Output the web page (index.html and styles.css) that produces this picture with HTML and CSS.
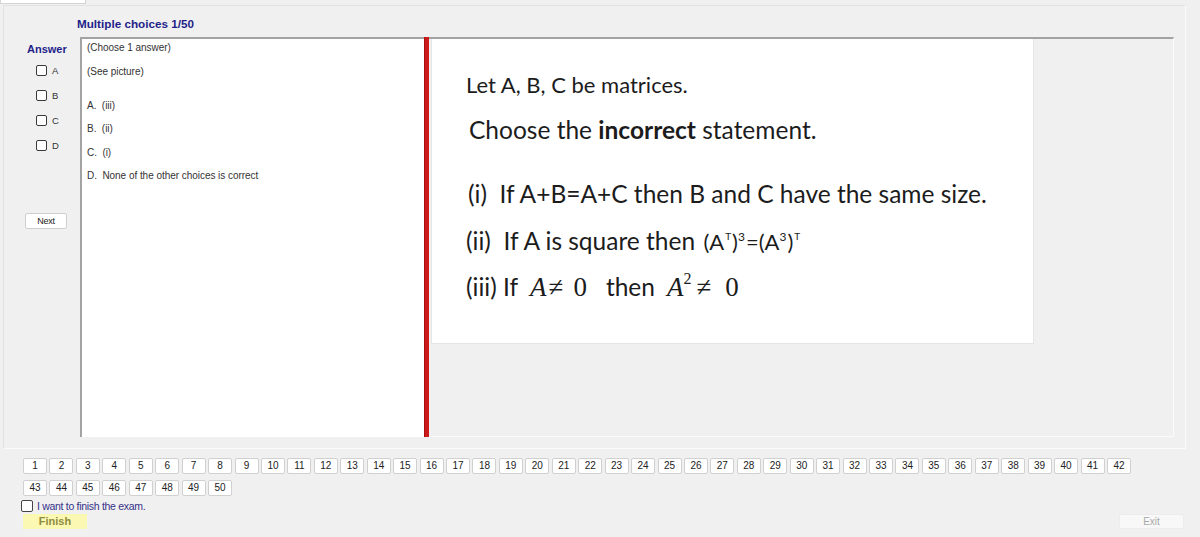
FILE: index.html
```html
<!DOCTYPE html>
<html>
<head>
<meta charset="utf-8">
<link rel="stylesheet" href="styles.css">
</head>
<body>
<div class="tab"></div>
<div class="frame">
  <div class="header">Multiple choices 1/50</div>
  <div class="main">
    <div class="answers">
      <div class="answer-label">Answer</div>
      <div class="opts">
        <div class="opt"><span class="cb"></span><span class="opt-l">A</span></div>
        <div class="opt"><span class="cb"></span><span class="opt-l">B</span></div>
        <div class="opt"><span class="cb"></span><span class="opt-l">C</span></div>
        <div class="opt"><span class="cb"></span><span class="opt-l">D</span></div>
      </div>
      <div class="next">Next</div>
    </div>
    <div class="textbox">
      <p class="first">(Choose 1 answer)</p>
      <p>(See picture)</p>
      <p class="gap">A.&nbsp; (iii)</p>
      <p>B.&nbsp; (ii)</p>
      <p>C.&nbsp; (i)</p>
      <p>D.&nbsp; None of the other choices is correct</p>
    </div>
    <div class="redbar"></div>
    <div class="picpanel">
      <div class="picture">
        <div class="pl l1">Let A, B, C be matrices.</div>
        <div class="pl l2">Choose the <b>incorrect</b> statement.</div>
        <div class="pl l3">(i)&nbsp; If A+B=A+C then B and C have the same size.</div>
        <div class="pl l4">(ii)&nbsp; If A is square then <span class="expr">(A<sup class="t">T</sup>)<sup>3</sup>=(A<sup>3</sup>)<sup class="t">T</sup></span></div>
        <div class="pl l5">(iii) If<span class="m m1"><i>A</i><span class="ne">≠</span><span class="z">0</span></span><span class="then">then</span><span class="m m2"><i>A</i><sup class="ms">2</sup><span class="ne ne2">≠</span><span class="z">0</span></span></div>
      </div>
    </div>
  </div>
</div>
<div class="bottom">
  <div class="navrow">
    <span class="nb">1</span><span class="nb">2</span><span class="nb">3</span><span class="nb">4</span><span class="nb">5</span><span class="nb">6</span><span class="nb">7</span><span class="nb">8</span><span class="nb">9</span><span class="nb">10</span><span class="nb">11</span><span class="nb">12</span><span class="nb">13</span><span class="nb">14</span><span class="nb">15</span><span class="nb">16</span><span class="nb">17</span><span class="nb">18</span><span class="nb">19</span><span class="nb">20</span><span class="nb">21</span><span class="nb">22</span><span class="nb">23</span><span class="nb">24</span><span class="nb">25</span><span class="nb">26</span><span class="nb">27</span><span class="nb">28</span><span class="nb">29</span><span class="nb">30</span><span class="nb">31</span><span class="nb">32</span><span class="nb">33</span><span class="nb">34</span><span class="nb">35</span><span class="nb">36</span><span class="nb">37</span><span class="nb">38</span><span class="nb">39</span><span class="nb">40</span><span class="nb">41</span><span class="nb">42</span>
  </div>
  <div class="navrow">
    <span class="nb">43</span><span class="nb">44</span><span class="nb">45</span><span class="nb">46</span><span class="nb">47</span><span class="nb">48</span><span class="nb">49</span><span class="nb">50</span>
  </div>
  <div class="finishline"><span class="cb2"></span><span class="ftext">I want to finish the exam.</span></div>
  <div class="actions">
    <div class="finish">Finish</div>
    <div class="exit">Exit</div>
  </div>
</div>
</body>
</html>
```
FILE: styles.css
```css
* { box-sizing: border-box; }
html, body {
  margin: 0;
  padding: 0;
  width: 1200px;
  height: 537px;
  overflow: hidden;
  background: #f0f0f0;
  font-family: "Liberation Sans", Arial, sans-serif;
  color: #222;
}
.tab {
  width: 86px;
  height: 4px;
  background: #fff;
  border: 1px solid #d4d4d4;
  border-top: none;
}
.frame {
  margin: 1px 0 0 3px;
  width: 1183px;
  height: 444px;
  border: 1px solid;
  border-color: #e2e2e2 #fbfbfb #fbfbfb #e2e2e2;
}
.header {
  height: 31px;
  padding: 11px 0 0 73px;
  font-size: 11.7px;
  line-height: 14px;
  font-weight: bold;
  color: #1f1f8a;
}
.main {
  display: flex;
  height: 400px;
}
.answers {
  width: 76px;
  flex: none;
}
.answer-label {
  margin: 5px 0 0 23px;
  font-size: 11px;
  line-height: 14px;
  font-weight: bold;
  color: #1f1f8a;
}
.opts {
  margin-top: 9px;
  padding-left: 32px;
}
.opt {
  height: 25px;
  display: flex;
  align-items: flex-start;
}
.cb {
  width: 11px;
  height: 11px;
  border: 1px solid #3a3a3a;
  border-radius: 2px;
  background: #fff;
  flex: none;
}
.opt-l {
  margin-left: 5px;
  font-size: 9.5px;
  line-height: 11px;
  color: #333;
}
.next {
  margin: 48px 0 0 21px;
  width: 42px;
  height: 16px;
  background: #fff;
  border: 1px solid #cfcfcf;
  border-radius: 2px;
  font-size: 9px;
  line-height: 14px;
  text-align: center;
  letter-spacing: -0.3px;
  color: #222;
}
.textbox {
  width: 344px;
  flex: none;
  background: #fff;
  border-left: 2px solid #a3a3a3;
  border-top: 2px solid #a3a3a3;
  padding-left: 5px;
  font-size: 10px;
  letter-spacing: -0.04px;
  color: #333;
}
.textbox p {
  margin: 0 0 9.5px 0;
  line-height: 14px;
}
.textbox p.first { margin-top: 2px; }
.textbox p.gap { margin-top: 20px; }
.redbar {
  width: 5px;
  flex: none;
  background: #cc1a1a;
  border-left: 1px solid #a81010;
}
.picpanel {
  width: 745px;
  flex: none;
  border-top: 2px solid #a3a3a3;
  border-right: 1px solid #fbfbfb;
  border-bottom: 1px solid #fbfbfb;
  padding-left: 2px;
}
.picture {
  width: 603px;
  height: 305px;
  background: #fff;
  border: 1px solid #e6e6e6;
  border-top: none;
  padding: 23px 0 0 34px;
  font-family: Lato, "Open Sans", sans-serif;
  font-size: 24.5px;
  color: #1c1c1c;
}
.pl {
  line-height: 45px;
  white-space: nowrap;
}
.pl b { font-weight: bold; }
.l1 { font-size: 22px; }
.l2 { padding-left: 3px; }
.l3 { margin-top: 19px; padding-left: 2px; }
.l4 { margin-top: 2px; }
.l5 { margin-top: 0px; }
.expr { font-size: 22px; margin-left: 2px; }
.pl sup {
  font-size: 12px;
  vertical-align: 9px;
  line-height: 0;
  margin: 0 1px 0 0;
}
.pl sup.t { font-size: 10px; vertical-align: 10px; margin: 0 1px; }
.m {
  font-family: "Liberation Serif", "Times New Roman", serif;
  font-size: 27px;
}
.m i { font-style: italic; }
.m1 { margin-left: 12px; }
.m2 { margin-left: 12px; }
.ne { margin: 0 10px 0 2px; }
.ne2 { margin: 0 14px 0 5px; }
.then { margin-left: 19px; }
.m sup.ms { font-size: 16px; vertical-align: 12px; margin: 0; }
.bottom {
  padding: 9px 16px 0 23px;
  height: 88px;
}
.navrow {
  display: flex;
  gap: 2.44px;
  margin-bottom: 6px;
}
.nb {
  width: 24px;
  height: 16px;
  flex: none;
  background: #fff;
  border: 1px solid #d0d0d0;
  border-radius: 2px;
  font-size: 10px;
  line-height: 14px;
  text-align: center;
  color: #222;
}
.finishline {
  margin: -3px 0 0 -2px;
  display: flex;
  align-items: center;
  height: 13px;
}
.cb2 {
  width: 12px;
  height: 12px;
  border: 1px solid #444;
  border-radius: 2px;
  background: #fff;
  flex: none;
}
.ftext {
  margin-left: 4px;
  font-size: 10.5px;
  letter-spacing: -0.3px;
  color: #35308a;
}
.actions {
  margin-top: 2px;
  display: flex;
  justify-content: space-between;
}
.finish {
  width: 64px;
  height: 15px;
  background: #fbf8b4;
  font-size: 11px;
  line-height: 15px;
  font-weight: bold;
  text-align: center;
  color: #8e8c3e;
}
.exit {
  width: 65px;
  height: 15px;
  background: #f8f8f8;
  border: 1px solid #ececec;
  border-radius: 2px;
  font-size: 10px;
  line-height: 13px;
  text-align: center;
  color: #a8a8a8;
}
```
